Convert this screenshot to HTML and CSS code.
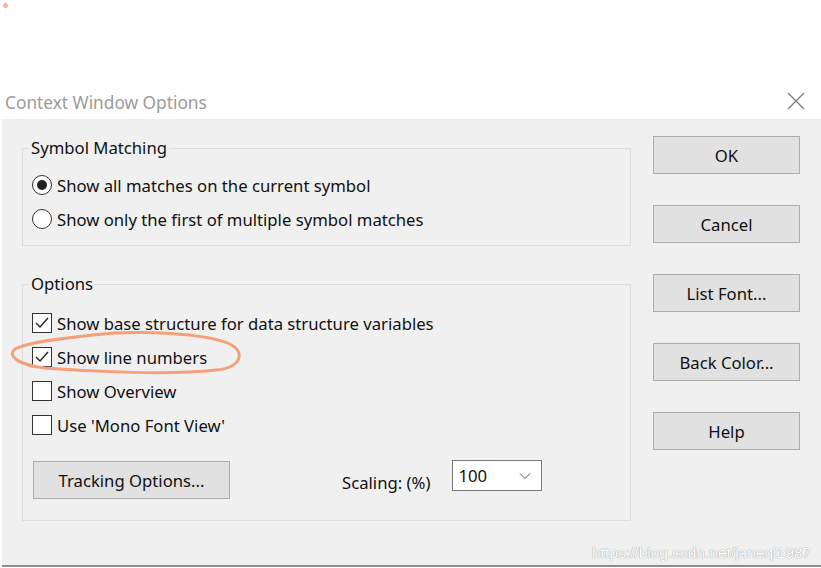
FILE: index.html
```html
<!DOCTYPE html>
<html lang="en">
<head>
    <meta charset="UTF-8">
    <meta name="viewport" content="width=device-width, initial-scale=1.0">
    <title>Context Window Options</title>
    <link rel="stylesheet" href="styles.css">
</head>
<body>
    <span class="dot"></span>

    <div class="titlebar">
        <span class="title">Context Window Options</span>
        <svg class="close" width="18" height="18" viewBox="0 0 18 18">
            <path d="M1 1 L17 17 M17 1 L1 17" stroke="#7a7a7a" stroke-width="1.2" fill="none"/>
        </svg>
    </div>

    <div class="dialog">
        <div class="left-col">
            <fieldset class="group group-symbol">
                <legend>Symbol Matching</legend>
                <label class="row"><span class="radio on"></span>Show all matches on the current symbol</label>
                <label class="row"><span class="radio"></span>Show only the first of multiple symbol matches</label>
            </fieldset>

            <fieldset class="group group-options">
                <legend>Options</legend>
                <label class="row"><span class="check on"><svg width="18" height="18" viewBox="0 0 18 18"><path d="M3 9 L7 13 L15 4" stroke="#222" stroke-width="1.4" fill="none"/></svg></span>Show base structure for data structure variables</label>
                <label class="row"><span class="check on"><svg width="18" height="18" viewBox="0 0 18 18"><path d="M3 9 L7 13 L15 4" stroke="#222" stroke-width="1.4" fill="none"/></svg></span>Show line numbers</label>
                <label class="row"><span class="check"></span>Show Overview</label>
                <label class="row"><span class="check"></span>Use 'Mono Font View'</label>

                <div class="bottom-row">
                    <button class="btn btn-tracking">Tracking Options...</button>
                    <span class="scaling-label">Scaling: (%)</span>
                    <div class="select">
                        <span>100</span>
                        <svg width="12" height="8" viewBox="0 0 12 8"><path d="M1 1.5 L6 6.5 L11 1.5" stroke="#555" stroke-width="1" fill="none"/></svg>
                    </div>
                </div>
            </fieldset>
        </div>

        <div class="right-col">
            <button class="btn">OK</button>
            <button class="btn">Cancel</button>
            <button class="btn">List Font...</button>
            <button class="btn">Back Color...</button>
            <button class="btn">Help</button>
        </div>

        <span class="watermark">https://blog.csdn.net/janeqi1987</span>
    </div>

    <!-- hand drawn mark around "Show line numbers" -->
    <svg class="annotation" width="260" height="60" viewBox="0 0 260 60">
        <path d="M92 5 C140 0, 205 3, 230 14 C246 22, 241 38, 216 40 C170 45, 95 42, 45 38 C18 35, 8 26, 14 20 C22 13, 60 8, 115 3"
              stroke="#f4a07a" stroke-width="3" fill="none" stroke-linecap="round"/>
    </svg>
</body>
</html>
```

FILE: styles.css
```css
* {
    margin: 0;
    padding: 0;
    box-sizing: border-box;
}

body {
    font-family: 'Noto Sans', 'Open Sans', sans-serif;
    font-size: 16.7px;
    color: #111;
    background-color: white;
    width: 821px;
    height: 568px;
    overflow: hidden;
    position: relative;
}

.dot {
    position: absolute;
    left: 3px;
    top: 3px;
    width: 5px;
    height: 5px;
    border-radius: 50%;
    background-color: #f9b69a;
}

.titlebar {
    margin-top: 85px;
    height: 34px;
    display: flex;
    align-items: center;
    justify-content: space-between;
    padding: 0 16px 0 5px;
}

.title {
    font-size: 17.3px;
    color: #9b9b9b;
}

.close {
    margin-top: -3px;
}

.dialog {
    margin-left: 2px;
    height: 448px;
    background-color: #f0f0f0;
    border-bottom: 2px solid #8c8c8c;
    display: flex;
    position: relative;
}

.left-col {
    width: 609px;
    margin-left: 20px;
    margin-top: 18px;
}

.group {
    border: 1px solid #dcdcdc;
    padding: 9px 0 9px 9px;
}

.group legend {
    margin-left: -3px;
    padding: 0 2px;
    line-height: 22px;
}

.group-options {
    margin-top: 27px;
    padding-top: 11px;
    padding-bottom: 21px;
}

.row {
    display: flex;
    align-items: center;
    height: 34px;
}

.radio {
    width: 20px;
    height: 20px;
    border: 1px solid #333;
    border-radius: 50%;
    background-color: white;
    margin-right: 5px;
    display: flex;
    align-items: center;
    justify-content: center;
}

.radio.on::after {
    content: '';
    width: 10px;
    height: 10px;
    border-radius: 50%;
    background-color: #222;
}

.check {
    width: 20px;
    height: 20px;
    border: 1px solid #333;
    background-color: white;
    margin-right: 5px;
    display: flex;
    align-items: center;
    justify-content: center;
}

.bottom-row {
    display: flex;
    align-items: flex-start;
    margin-top: 19px;
}

.btn {
    width: 147px;
    height: 38px;
    background-color: #e1e1e1;
    border: 1px solid #adadad;
    font-family: inherit;
    font-size: 16.7px;
    color: #111;
}

.btn-tracking {
    width: 197px;
    margin-left: 1px;
}

.scaling-label {
    margin-left: 112px;
    margin-top: 10px;
}

.select {
    margin-left: 22px;
    margin-top: -1px;
    width: 90px;
    height: 31px;
    background-color: white;
    border: 1px solid #7a7a7a;
    display: flex;
    align-items: center;
    justify-content: space-between;
    padding: 0 10px 0 5px;
}

.right-col {
    margin-left: 22px;
    margin-top: 17px;
    display: flex;
    flex-direction: column;
    gap: 31px;
}

.watermark {
    position: absolute;
    right: 10px;
    bottom: 3px;
    font-family: 'Liberation Sans', Arial, sans-serif;
    font-size: 15.5px;
    color: #ffffff;
    text-shadow: 0 0 1px #999999, 0 0 1px #aaaaaa;
}

.annotation {
    position: absolute;
    left: 0;
    top: 330px;
}
```
